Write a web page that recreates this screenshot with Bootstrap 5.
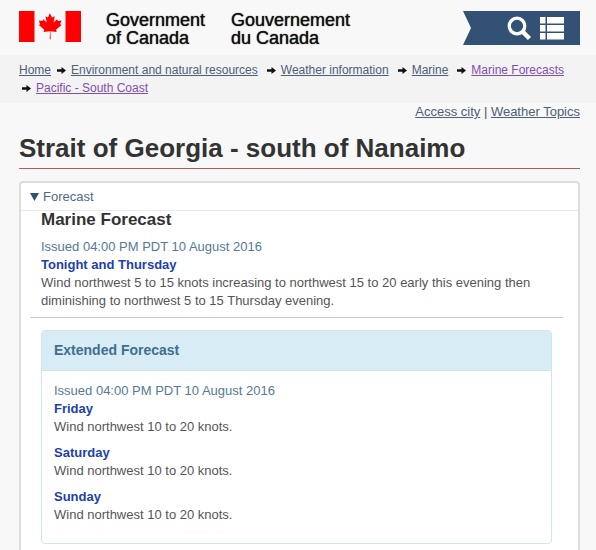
<!DOCTYPE html>
<html lang="en">
<head>
<meta charset="utf-8">
<meta name="viewport" content="width=device-width, initial-scale=1">
<title>Strait of Georgia - south of Nanaimo</title>
<link href="https://cdn.jsdelivr.net/npm/bootstrap@5.3.0/dist/css/bootstrap.min.css" rel="stylesheet">
<style>
  body { font-family: "Liberation Sans", Arial, sans-serif; font-size: 13px; line-height: 18px; color: #555; background: #f8f8f8; }
  .site-gutter { padding-left: 19px; padding-right: 16px; }
  .site-top { padding-top: 11px; padding-bottom: 8px; }
  .flag { width: 62px; height: 31px; }
  .wordmark { font-size: 18px; line-height: 18px; color: #111; text-shadow: 0 0 1px #111; gap: 26px; margin-left: 25px; }
  .search-btn { width: 117px; height: 34px; background: #335075; clip-path: polygon(0 0, 100% 0, 100% 100%, 0 100%, 8px 50%); gap: 8px; padding: 0 16px; }
  .crumb-bar { background: #f3f3f3; padding-top: 6px; padding-bottom: 6px; }
  .crumbs { font-size: 12px; }
  .crumbs li + li { padding-left: 6px; }
  .crumbs li + li + li { padding-left: 9px; }
  .crumbs li:last-child { padding-left: 3px; }
  .crumbs svg { margin-right: 5px; }
  a { color: #4c6078; }
  a:hover { color: #0535d2; }
  a.seen { color: #7f4fae; }
  h1 { font-size: 26px; line-height: 32px; font-weight: 700; color: #333; border-bottom: 1px solid #af5c5c; padding-bottom: 4px; margin: 11px 0 12px; }
  .forecast-box { background: #fff; border: 2px solid #ddd; border-bottom: 0; border-radius: 4px 4px 0 0; }
  .forecast-box summary { list-style: none; color: #4f6b84; border-bottom: 1px solid #e8e8e8; padding: 5px 9px 4px; }
  .forecast-box summary::-webkit-details-marker { display: none; }
  .forecast-body { padding: 0 26px 0 20px; }
  h2 { font-size: 17px; line-height: 18px; font-weight: 700; color: #333; margin-bottom: 9px; }
  .issued { color: #557a94; }
  .period { font-size: 13px; line-height: 18px; font-weight: 700; color: #1c3fae; margin: 0; }
  .divider { margin: 7px -11px 12px; border-top: 1px solid #ccc; opacity: 1; }
  .extended { border: 1px solid #cfe6ee; border-radius: 4px; }
  .extended-title { background: #d7ecf5; color: #3f6f8d; font-size: 14px; line-height: 18px; font-weight: 700; padding: 10px 12px 11px; margin: 0; border-bottom: 1px solid #cfe6ee; }
  .extended-body { padding: 11px 12px; }
  .day { margin-bottom: 8px; }
</style>
</head>
<body class="d-flex flex-column min-vh-100">
<header>
  <div class="site-top site-gutter d-flex align-items-start">
    <svg class="flag flex-shrink-0" viewBox="0 0 62 31" role="img" aria-label="Flag of Canada">
      <path fill="#f8f8f8" d="M0 0h62v31H0z"/>
      <path fill="#f00" d="M0 0h15.500v31H0zM46.500 0H62v31H46.500z"/>
      <path fill="#f00" d="M30.800 2.200l2.300 4.300 2.700-1.300-1.300 6.300 3.500-3.300.8 1.800 3.600-.6-1.200 3.800 1.300.8-5.500 4.700.7 2.400-6.300-.9.300 8.100h-1l.3-8.100-6.400.9.700-2.400-5.500-4.700 1.300-.8-1.200-3.800 3.600.6.8-1.800 3.500 3.300-1.300-6.300 2.500 1.300z"/>
    </svg>
    <div class="wordmark d-flex">
      <div>Government<br>of Canada</div>
      <div lang="fr">Gouvernement<br>du Canada</div>
    </div>
    <button type="button" class="search-btn btn border-0 rounded-0 ms-auto d-flex align-items-center justify-content-end" aria-label="Search and menus">
      <svg width="25" height="25" viewBox="0 0 25 25" fill="none" stroke="#fff"><circle cx="10" cy="10" r="7.800" stroke-width="3.300"/><path d="M16 16l6.500 6.500" stroke-width="4.500"/></svg>
      <svg width="24" height="23" viewBox="0 0 24 23" fill="#fff"><path d="M0 0h5.500v6.500H0zM7 0h17v6.500H7zM0 8h5.500v6.500H0zM7 8h17v6.500H7zM0 16h5.500v6.500H0zM7 16h17v6.500H7z"/></svg>
    </button>
  </div>
  <nav class="crumb-bar site-gutter" aria-label="Breadcrumb">
    <svg class="d-none"><symbol id="arrow" viewBox="0 0 9 7"><path fill="#111" d="M0 2.300h4.500V0L9 3.500 4.500 7V4.700H0z"/></symbol></svg>
    <ol class="crumbs list-unstyled d-flex flex-wrap mb-0 text-nowrap">
      <li><a href="#">Home</a></li>
      <li><svg width="9" height="7" aria-hidden="true"><use href="#arrow"/></svg><a href="#">Environment and natural resources</a></li>
      <li><svg width="9" height="7" aria-hidden="true"><use href="#arrow"/></svg><a href="#">Weather information</a></li>
      <li><svg width="9" height="7" aria-hidden="true"><use href="#arrow"/></svg><a href="#">Marine</a></li>
      <li><svg width="9" height="7" aria-hidden="true"><use href="#arrow"/></svg><a class="seen" href="#">Marine Forecasts</a></li>
      <li><svg width="9" height="7" aria-hidden="true"><use href="#arrow"/></svg><a class="seen" href="#">Pacific - South Coast</a></li>
    </ol>
  </nav>
</header>
<main class="site-gutter d-flex flex-column flex-grow-1">
  <div class="text-end"><a href="#">Access city</a> | <a href="#">Weather Topics</a></div>
  <h1>Strait of Georgia - south of Nanaimo</h1>
  <details class="forecast-box flex-grow-1" open>
    <summary class="d-flex align-items-center"><svg class="me-1" width="9" height="8" viewBox="0 0 9 8" aria-hidden="true"><path fill="#335075" d="M0 0h9L4.500 8z"/></svg>Forecast</summary>
    <div class="forecast-body">
      <h2>Marine Forecast</h2>
      <div class="issued">Issued 04:00 PM PDT 10 August 2016</div>
      <h3 class="period">Tonight and Thursday</h3>
      <p class="mb-0">Wind northwest 5 to 15 knots increasing to northwest 15 to 20 early this evening then diminishing to northwest 5 to 15 Thursday evening.</p>
      <hr class="divider">
      <section class="extended">
        <h2 class="extended-title">Extended Forecast</h2>
        <div class="extended-body">
          <div class="issued">Issued 04:00 PM PDT 10 August 2016</div>
          <div class="day"><h3 class="period">Friday</h3>Wind northwest 10 to 20 knots.</div>
          <div class="day"><h3 class="period">Saturday</h3>Wind northwest 10 to 20 knots.</div>
          <div class="day"><h3 class="period">Sunday</h3>Wind northwest 10 to 20 knots.</div>
        </div>
      </section>
    </div>
  </details>
</main>
<script src="https://cdn.jsdelivr.net/npm/bootstrap@5.3.0/dist/js/bootstrap.bundle.min.js"></script>
</body>
</html>
